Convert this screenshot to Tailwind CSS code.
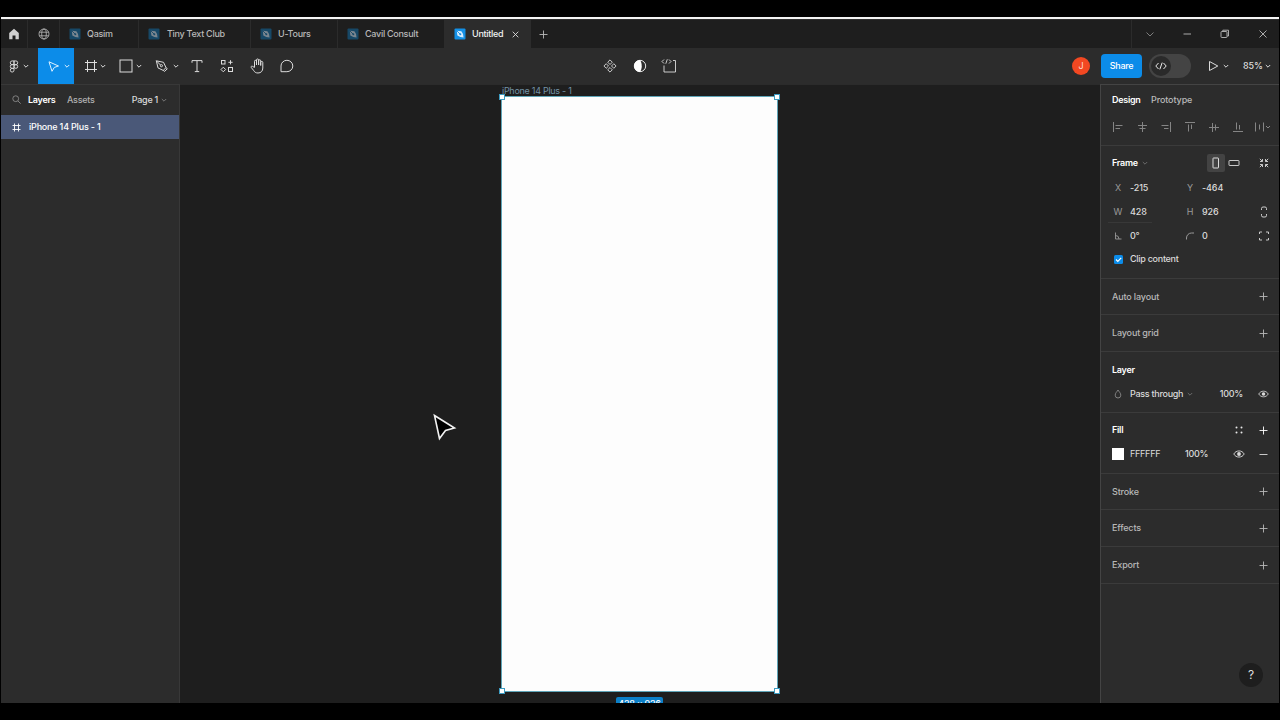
<!DOCTYPE html>
<html lang="en">
<head>
<meta charset="utf-8">
<title>Untitled</title>
<script src="https://cdn.jsdelivr.net/npm/@tailwindcss/browser@4"></script>
</head>
<body class="w-[1280px] h-[720px] overflow-hidden bg-black font-['Inter',sans-serif] text-[9px] leading-3 tracking-[-0.28px] font-medium text-[#dadada]">
<svg class="hidden">
  <symbol id="chev" viewBox="0 0 6 6"><path d="M.8 2 3 4.2 5.2 2" fill="none" stroke="currentColor"/></symbol>
  <symbol id="plus" viewBox="0 0 9 9"><path d="M4.500 .5v8M.5 4.500h8" fill="none" stroke="currentColor" stroke-width=".9"/></symbol>
  <symbol id="doc" viewBox="0 0 12 12"><rect x=".5" y=".5" width="11" height="11" rx="1" fill="currentColor"/><path d="M2.800 2.800l4.600.4 1.600 2.800.6 3.600-3.200-.6L3.400 7.400z" fill="#d3ecff"/><path d="M2.800 2.800l3.400 3.400" stroke="currentColor" stroke-width=".9"/><circle cx="6.300" cy="6.200" r="1" fill="currentColor"/></symbol>
  <symbol id="eye" viewBox="0 0 12 8"><path d="M.8 4C3-.1 9-.1 11.200 4 9 8.100 3 8.100.8 4z" fill="none" stroke="currentColor" stroke-width=".9"/><circle cx="6" cy="4" r="1.900" fill="currentColor"/></symbol>
  <symbol id="frame" viewBox="0 0 14 14"><path d="M3.500 1v12M10.500 1v12M1 3.500h12M1 10.500h12" fill="none" stroke="currentColor"/></symbol>
</svg>

<div class="ml-px mt-[17px] w-[1278px] h-[686px] flex flex-col overflow-hidden bg-[#2c2c2c]">
  <div class="h-0.5 shrink-0 bg-[#f4f4f4]"></div>

  <!-- Tabs -->
  <header class="h-[29px] shrink-0 flex items-stretch bg-[#1e1e1e] text-[#b9b9b9] border-t border-[#303030]">
    <div class="w-[27px] flex items-center justify-center border-r border-[#2b2b2b] text-[#cfcfcf]">
      <svg class="size-3" viewBox="0 0 12 12"><path d="M6 .8 1.200 5v6.200h3.300V7.500h3v3.700h3.300V5z" fill="currentColor"/></svg>
    </div>
    <div class="w-8 flex items-center justify-center pl-px border-r border-[#2b2b2b]">
      <svg class="size-3" viewBox="0 0 12 12" fill="none" stroke="currentColor" stroke-width=".8"><circle cx="6" cy="6" r="5"/><ellipse cx="6" cy="6" rx="2.300" ry="5"/><path d="M1.200 4.200h9.600M1.200 7.800h9.600"/></svg>
    </div>
    <div class="w-[79px] flex items-center gap-[6px] pl-[9px] border-r border-[#2b2b2b]"><svg class="size-3 text-[#1273b0] opacity-50"><use href="#doc"/></svg>Qasim</div>
    <div class="w-28 flex items-center gap-[7px] pl-[9px] border-r border-[#2b2b2b]"><svg class="size-3 text-[#1273b0] opacity-50"><use href="#doc"/></svg>Tiny Text Club</div>
    <div class="w-[87px] flex items-center gap-[6px] pl-[9px] border-r border-[#2b2b2b]"><svg class="size-3 text-[#1273b0] opacity-50"><use href="#doc"/></svg>U-Tours</div>
    <div class="w-[106px] flex items-center gap-[6px] pl-[9px]"><svg class="size-3 text-[#1273b0] opacity-50"><use href="#doc"/></svg>Cavil Consult</div>
    <div class="w-[87px] flex items-center gap-[6px] pl-[10px] bg-[#2c2c2c] text-[#f2f2f2]"><svg class="size-3 text-[#1390e6]"><use href="#doc"/></svg>Untitled
      <svg class="size-[7px] ml-[3px]" viewBox="0 0 7 7"><path d="m.7.7 5.600 5.600M6.300.7.7 6.300" stroke="#ddd" stroke-width=".9"/></svg>
    </div>
    <div class="w-[25px] flex items-center justify-center"><svg class="size-[9px]"><use href="#plus"/></svg></div>
    <div class="ml-auto w-[148px] flex items-center border-l border-[#2b2b2b]">
      <svg class="ml-[13px] size-[10px]" viewBox="0 0 10 10"><path d="M1.500 3.500 5 7l3.500-3.500" fill="none" stroke="#888" stroke-width=".9"/></svg>
      <svg class="ml-[27px] size-[10px]" viewBox="0 0 10 10"><path d="M1.500 5h7.500" stroke="#aaa"/></svg>
      <svg class="ml-[28px] size-[10px]" viewBox="0 0 10 10" fill="none" stroke="#bbb" stroke-width=".9"><rect x="1" y="2.500" width="6" height="6" rx=".8"/><path d="M2.800 2.300V1.200h5.700v5.800H7.200"/></svg>
      <svg class="ml-[28px] size-[10px]" viewBox="0 0 10 10"><path d="m1.500 1.500 7 7m0-7-7 7" stroke="#bbb" stroke-width=".9"/></svg>
    </div>
  </header>

  <!-- Toolbar -->
  <div class="h-9 shrink-0 flex items-center text-[#dcdcdc]">
    <div class="w-[37px] h-full flex items-center pl-[8px] gap-1">
      <svg class="w-[10px] h-[13px]" viewBox="0 0 10 14" fill="none" stroke="currentColor"><path d="M5 1H3a2 2 0 0 0 0 4h2zM5 1h2a2 2 0 0 1 0 4H5zM5 5H3a2 2 0 0 0 0 4h2zM5 9H3a2 2 0 1 0 2 2z"/><circle cx="7" cy="7" r="2"/></svg>
      <svg class="size-[6px]"><use href="#chev"/></svg>
    </div>
    <div class="w-9 h-full flex items-center pl-[9px] gap-[4px] bg-[#0c8ce9] text-[#dff1ff]">
      <svg class="size-[13px]" viewBox="0 0 13 13"><path d="M2 1.800 11.500 6 7.300 7.400 5 11.300z" fill="none" stroke="currentColor" stroke-linejoin="round"/></svg>
      <svg class="size-[6px]"><use href="#chev"/></svg>
    </div>
    <div class="w-[35px] flex items-center pl-[10px] gap-[2px]">
      <svg class="size-[14px]"><use href="#frame"/></svg><svg class="size-[6px]"><use href="#chev"/></svg>
    </div>
    <div class="w-9 flex items-center pl-[10px] gap-[3px]">
      <svg class="size-[14px]" viewBox="0 0 14 14"><rect x="1" y="1" width="12" height="12" fill="none" stroke="currentColor"/></svg><svg class="size-[6px]"><use href="#chev"/></svg>
    </div>
    <div class="w-[37px] flex items-center pl-[10px] gap-[4px]">
      <svg class="size-[14px]" viewBox="0 0 14 14" fill="none" stroke="currentColor" stroke-linejoin="round"><path d="M1.300 1.800 8.500 3.300 11 8.600 8.200 11.400 3 8.900zM11 8.600l1.300 1.100-2.600 2.700-1.500-1M1.300 1.800l4.200 4.200"/><circle cx="6.400" cy="6.700" r="1.100"/></svg><svg class="size-[6px]"><use href="#chev"/></svg>
    </div>
    <div class="w-[29px] flex justify-center"><svg class="size-[14px]" viewBox="0 0 14 14"><path d="M2 3.800V1.600h10v2.200M7 1.600v11M4.800 12.600h4.400" fill="none" stroke="currentColor"/></svg></div>
    <div class="w-[32px] flex justify-center"><svg class="size-[14px]" viewBox="0 0 14 14" fill="none" stroke="currentColor"><rect x="1.500" y="1.500" width="3.500" height="3.500"/><rect x="8.500" y="8.500" width="4" height="4"/><path d="M3.300 8.200 5.600 10.500 3.300 12.800 1 10.500zM10.500 1.200v4.200M8.400 3.300h4.200"/></svg></div>
    <div class="w-[29px] flex justify-center"><svg class="w-[15px] h-4" viewBox="0 0 15 16" fill="none" stroke="currentColor" stroke-linejoin="round" stroke-linecap="round"><path d="M4.500 9V3.300a1 1 0 0 1 2 0V7 2a1 1 0 0 1 2.100 0v5-4.200a1 1 0 0 1 2.100 0V7.500 4.500a1 1 0 0 1 2.100 0V10c0 3-1.800 5-4.800 5-2.300 0-3.500-1-4.500-2.700L1.200 9.400c-.5-1 .7-1.800 1.500-1z"/></svg></div>
    <div class="w-[30px] flex justify-center"><svg class="size-[14px]" viewBox="0 0 14 14"><path d="M1 12.700V7a5.900 5.700 0 1 1 5.900 5.700z" fill="none" stroke="currentColor" stroke-linejoin="round"/></svg></div>
    <div class="ml-[301px] flex gap-4">
      <svg class="size-[14px]" viewBox="0 0 14 14" fill="none" stroke="currentColor" stroke-width=".9"><path d="M7 .9 9.300 3.200 7 5.500 4.700 3.200zM7 8.500l2.300 2.300L7 13.100l-2.300-2.300zM3.200 4.700 5.500 7 3.200 9.300.9 7zM10.800 4.700 13.100 7l-2.300 2.300L8.500 7z"/></svg>
      <svg class="size-[14px]" viewBox="0 0 14 14"><circle cx="7" cy="7" r="5.700" fill="none" stroke="#e8e8e8"/><path d="M7 1a6 6 0 0 0 0 12c2.300-3 2.300-9 0-12z" fill="#fff"/></svg>
      <svg class="-ml-[2px] w-4 h-[14px]" viewBox="0 0 16 14" fill="none" stroke="currentColor" stroke-width=".9"><path d="M3 6.500V13h11.500V1.500H12M3 .5 1 2.500l2 2M8 .5l2 2-2 2M6.300.3 4.800 4.700"/></svg>
    </div>
    <div class="ml-auto flex items-center">
      <div class="size-[18px] rounded-full bg-[#f24822] text-[#ffd9cf] font-normal flex items-center justify-center">J</div>
      <div class="ml-[11px] w-[41px] h-6 rounded-[4px] bg-[#0c8ce9] text-white flex items-center justify-center">Share</div>
      <div class="ml-[7px] w-[42px] h-6 p-[2px] rounded-full bg-[#444] flex items-center">
        <div class="size-5 rounded-full bg-[#2a2a2a] flex items-center justify-center"><svg class="w-3 h-2" viewBox="0 0 12 8" fill="none" stroke="#fff" stroke-width=".9"><path d="M3.500 1 .8 4l2.700 3M8.500 1l2.700 3-2.700 3M7.200.6 4.800 7.400"/></svg></div>
      </div>
      <svg class="ml-[17px] w-[11px] h-3" viewBox="0 0 11 12"><path d="M1.500 1.500 9.800 6 1.500 10.500z" fill="none" stroke="currentColor" stroke-linejoin="round"/></svg>
      <svg class="ml-1 size-[6px]"><use href="#chev"/></svg>
      <span class="ml-[14px] w-[20px] tracking-[-0.1px]">85%</span>
      <svg class="ml-[2px] mr-[8px] size-[6px]"><use href="#chev"/></svg>
    </div>
  </div>

  <main class="flex-1 min-h-0 flex">
    <!-- Layers -->
    <aside class="w-[179px] shrink-0 border-r border-t border-[#383838]">
      <div class="h-[29px] flex items-center pl-[11px]">
        <svg class="size-[9px] text-[#8a8a8a]" viewBox="0 0 9 9" fill="none" stroke="currentColor" stroke-width=".9"><circle cx="3.700" cy="3.700" r="2.900"/><path d="m6 6 2.700 2.700"/></svg>
        <span class="ml-[7px] w-[39px] font-semibold text-white">Layers</span>
        <span class="text-[#b0b0b0]">Assets</span>
        <span class="ml-auto">Page 1</span>
        <svg class="ml-[3px] mr-[12px] size-[6px] text-[#777]"><use href="#chev"/></svg>
      </div>
      <div class="mt-px h-6 flex items-center pl-[11px] bg-[#4a5878] text-white">
        <svg class="size-[9px]" viewBox="0 0 9 9"><path d="M2.500 .5v8M6.500 .5v8M.5 2.500h8M.5 6.500h8" fill="none" stroke="currentColor" stroke-width=".9"/></svg><span class="ml-[8px] tracking-[-0.2px]">iPhone 14 Plus - 1</span>
      </div>
    </aside>

    <!-- Canvas -->
    <section class="relative w-[920px] shrink-0 overflow-hidden bg-[#1e1e1e] border-t border-[#2b2b2b]">
      <div class="absolute left-[322px] top-0 font-normal text-[#7392a6] whitespace-nowrap">iPhone 14 Plus - 1</div>
      <div class="absolute left-[321px] top-[11px] w-[277px] h-[596px] bg-[#fdfdfd] border border-[#5fa5b8]">
        <i class="absolute -left-[3px] -top-[3px] size-[6px] bg-white border border-[#3d9cc2]"></i>
        <i class="absolute -right-[3px] -top-[3px] size-[6px] bg-white border border-[#3d9cc2]"></i>
        <i class="absolute -left-[3px] -bottom-[3px] size-[6px] bg-white border border-[#3d9cc2]"></i>
        <i class="absolute -right-[3px] -bottom-[3px] size-[6px] bg-white border border-[#3d9cc2]"></i>
      </div>
      <div class="absolute left-[436px] top-[612px] w-[47px] h-[14px] rounded-[2px] bg-[#0c80c8] text-white text-center leading-[13px]">428 × 926</div>
      <svg class="absolute left-[252px] top-[327px] w-[26px] h-[30px]" viewBox="0 0 26 30"><path d="M2.500 3.500 22.500 16 13.500 18.500 7.500 26.500z" fill="#000" stroke="#f2f2f2" stroke-width="1.600"/></svg>
    </section>

    <!-- Properties -->
    <aside class="relative flex-1 border-l border-t border-[#444]">
      <div class="h-[29px] flex items-center pl-[11px]"><span class="w-[39px] font-semibold text-white">Design</span><span class="text-[#bababa] tracking-[-0.1px]">Prototype</span></div>
      <div class="h-[31px] flex pl-[11px] pt-[7px] gap-3 text-[#858585]">
        <svg class="size-3" viewBox="0 0 12 12" fill="none" stroke="currentColor"><path d="M1.500 1v10M3.500 4.500h7M3.500 7.500h4.500"/></svg>
        <svg class="size-3" viewBox="0 0 12 12" fill="none" stroke="currentColor"><path d="M6.500 1v10M2 4.500h9M3.500 7.500h6"/></svg>
        <svg class="size-3" viewBox="0 0 12 12" fill="none" stroke="currentColor"><path d="M10.500 1v10M1.500 4.500h7M4 7.500h4.500"/></svg>
        <svg class="size-3" viewBox="0 0 12 12" fill="none" stroke="currentColor"><path d="M1 1.500h10M4.500 3.500v7M7.500 3.500V8"/></svg>
        <svg class="size-3" viewBox="0 0 12 12" fill="none" stroke="currentColor"><path d="M1 6.500h10M4.500 2v9M7.500 3.500v6"/></svg>
        <svg class="size-3" viewBox="0 0 12 12" fill="none" stroke="currentColor"><path d="M1 10.500h10M4.500 1.500v7M7.500 4v4.500"/></svg>
        <svg class="-ml-[2px] w-[18px] h-3" viewBox="0 0 18 12" fill="none" stroke="currentColor"><path d="M1.500 1.500v9M5.500 3.500v5M9.500 1.500v9M12 5l2 2 2-2"/></svg>
      </div>

      <section class="h-[133px] border-t border-[#3b3b3b] pt-[5px] pl-[11px] pr-2">
        <div class="h-6 flex items-center">
          <span class="font-semibold text-white">Frame</span><svg class="ml-1 size-[6px] text-[#6c6c6c]"><use href="#chev"/></svg>
          <div class="ml-auto w-[18px] h-[18px] rounded-[2px] bg-[#434343] flex items-center justify-center"><svg class="w-2 h-3" viewBox="0 0 8 12"><rect x="1" y="1" width="5.500" height="10" rx=".5" fill="none" stroke="#eee" stroke-width=".9"/></svg></div>
          <svg class="ml-[3px] w-3 h-2" viewBox="0 0 12 8"><rect x="1" y="1.500" width="10" height="5" rx=".5" fill="none" stroke="currentColor" stroke-width=".9"/></svg>
          <svg class="ml-[19px] mr-[2px] size-[10px]" viewBox="0 0 10 10" fill="none" stroke="currentColor" stroke-width=".9"><path d="M1 3.500h2.500V1M9 3.500H6.500V1M1 6.500h2.500V9M9 6.500H6.500V9M.8.8l2.500 2.500M9.200.8 6.700 3.300M.8 9.200l2.500-2.500M9.200 9.200 6.700 6.700"/></svg>
        </div>
        <div class="h-6 pt-px grid grid-cols-[12px_48px_12px_1fr_14px] gap-x-[6px] items-center tracking-[-0.1px]"><span class="text-center font-normal text-[#9a9a9a]">X</span><span>-215</span><span class="text-center font-normal text-[#9a9a9a]">Y</span><span>-464</span></div>
        <div class="h-6 pt-px grid grid-cols-[12px_48px_12px_1fr_14px] gap-x-[6px] items-center tracking-[-0.1px]"><span class="text-center font-normal text-[#9a9a9a]">W</span><span>428</span><span class="text-center font-normal text-[#9a9a9a]">H</span><span>926</span>
          <svg class="w-[14px] h-3" viewBox="0 0 14 12" fill="none" stroke="currentColor" stroke-width=".9"><path d="M4.500 4V2.500a1.500 1.500 0 0 1 1.500-1.500h2a1.500 1.500 0 0 1 1.500 1.500V4M4.500 8v1.500A1.500 1.500 0 0 0 6 11h2a1.500 1.500 0 0 0 1.500-1.500V8"/></svg></div>
        <div class="relative h-6 pt-px grid grid-cols-[12px_48px_12px_1fr_14px] gap-x-[6px] items-center"><i class="absolute -left-1 top-[-1px] w-[44px] h-px bg-[#383838]"></i><svg class="size-3 text-[#999]" viewBox="0 0 12 12" fill="none" stroke="currentColor" stroke-width=".9"><path d="M3.500 2.500v6.500h6M3.500 5.500A3.500 3.500 0 0 1 7 9"/></svg><span>0°</span>
          <svg class="size-3 text-[#999]" viewBox="0 0 12 12" fill="none" stroke="currentColor"><path d="M2.500 9.500V8a5 5 0 0 1 5-5H10"/></svg><span>0</span>
          <svg class="w-[14px] h-3" viewBox="0 0 14 12" fill="none" stroke="currentColor" stroke-width=".9"><path d="M2.500 4V2h2.500M9 2h2.500v2M11.500 8v2H9M5 10H2.500V8"/></svg></div>
        <div class="h-6 flex items-center"><svg class="mx-[2px] size-[9px]" viewBox="0 0 9 9"><rect width="9" height="9" rx="1.500" fill="#0c8ce9"/><path d="m2 4.500 1.800 1.800L7.200 2.800" fill="none" stroke="#fff" stroke-width="1.200"/></svg><span class="ml-[5px]">Clip content</span></div>
      </section>

      <section class="h-[36px] border-t border-[#3b3b3b] pl-[11px] pr-[11px] flex items-center justify-between text-[#b8b8b8] tracking-[-0.15px]">Auto layout<svg class="size-[9px]"><use href="#plus"/></svg></section>
      <section class="h-[37px] border-t border-[#3b3b3b] pl-[11px] pr-[11px] flex items-center justify-between text-[#b8b8b8] tracking-[-0.15px]">Layout grid<svg class="size-[9px]"><use href="#plus"/></svg></section>
      <section class="h-[61px] border-t border-[#3b3b3b] pt-[6px] pl-[11px] pr-[10px]">
        <div class="h-6 flex items-center font-semibold text-white">Layer</div>
        <div class="h-6 flex items-center">
          <svg class="size-3 text-[#8a8a8a]" viewBox="0 0 12 12"><path d="M6 2C5 3.800 3.200 5 3.200 7.200a2.800 2.800 0 0 0 5.600 0C8.800 5 7 3.800 6 2z" fill="none" stroke="currentColor" stroke-width=".9"/></svg>
          <span class="ml-[6px]">Pass through</span><svg class="ml-[4px] size-[6px] text-[#6c6c6c]"><use href="#chev"/></svg>
          <span class="ml-auto">100%</span><svg class="ml-[15px] w-[11px] h-2"><use href="#eye"/></svg>
        </div>
      </section>
      <section class="h-[61px] border-t border-[#3b3b3b] pt-[5px] pl-[11px] pr-[11px]">
        <div class="h-6 flex items-center font-semibold text-white">Fill
          <svg class="ml-auto size-2" viewBox="0 0 8 8" fill="#e8e8e8"><circle cx="1.500" cy="1.500" r="1"/><circle cx="6.500" cy="1.500" r="1"/><circle cx="1.500" cy="6.500" r="1"/><circle cx="6.500" cy="6.500" r="1"/></svg>
          <svg class="ml-4 size-[9px]"><use href="#plus"/></svg></div>
        <div class="h-6 flex items-center"><div class="size-3 bg-white"></div><span class="ml-[6px] w-[55px] font-normal">FFFFFF</span><span>100%</span>
          <svg class="ml-auto w-[12px] h-2"><use href="#eye"/></svg><svg class="ml-[14px] size-[9px]" viewBox="0 0 9 9"><path d="M.5 4.500h8" stroke="currentColor" stroke-width=".9"/></svg></div>
      </section>
      <section class="h-[36px] border-t border-[#3b3b3b] pl-[11px] pr-[11px] flex items-center justify-between text-[#b8b8b8] tracking-[-0.15px]">Stroke<svg class="size-[9px]"><use href="#plus"/></svg></section>
      <section class="h-[37px] border-t border-[#3b3b3b] pl-[11px] pr-[11px] flex items-center justify-between text-[#b8b8b8] tracking-[-0.15px]">Effects<svg class="size-[9px]"><use href="#plus"/></svg></section>
      <section class="h-[38px] border-y border-[#3b3b3b] pl-[11px] pr-[11px] flex items-center justify-between text-[#b8b8b8] tracking-[-0.15px]">Export<svg class="size-[9px]"><use href="#plus"/></svg></section>

      <div class="absolute right-[16px] bottom-[16px] size-6 rounded-full bg-[#1e1e1e] flex items-center justify-center text-[12px] leading-none font-normal text-[#ddd]">?</div>
    </aside>
  </main>
</div>
</body>
</html>
